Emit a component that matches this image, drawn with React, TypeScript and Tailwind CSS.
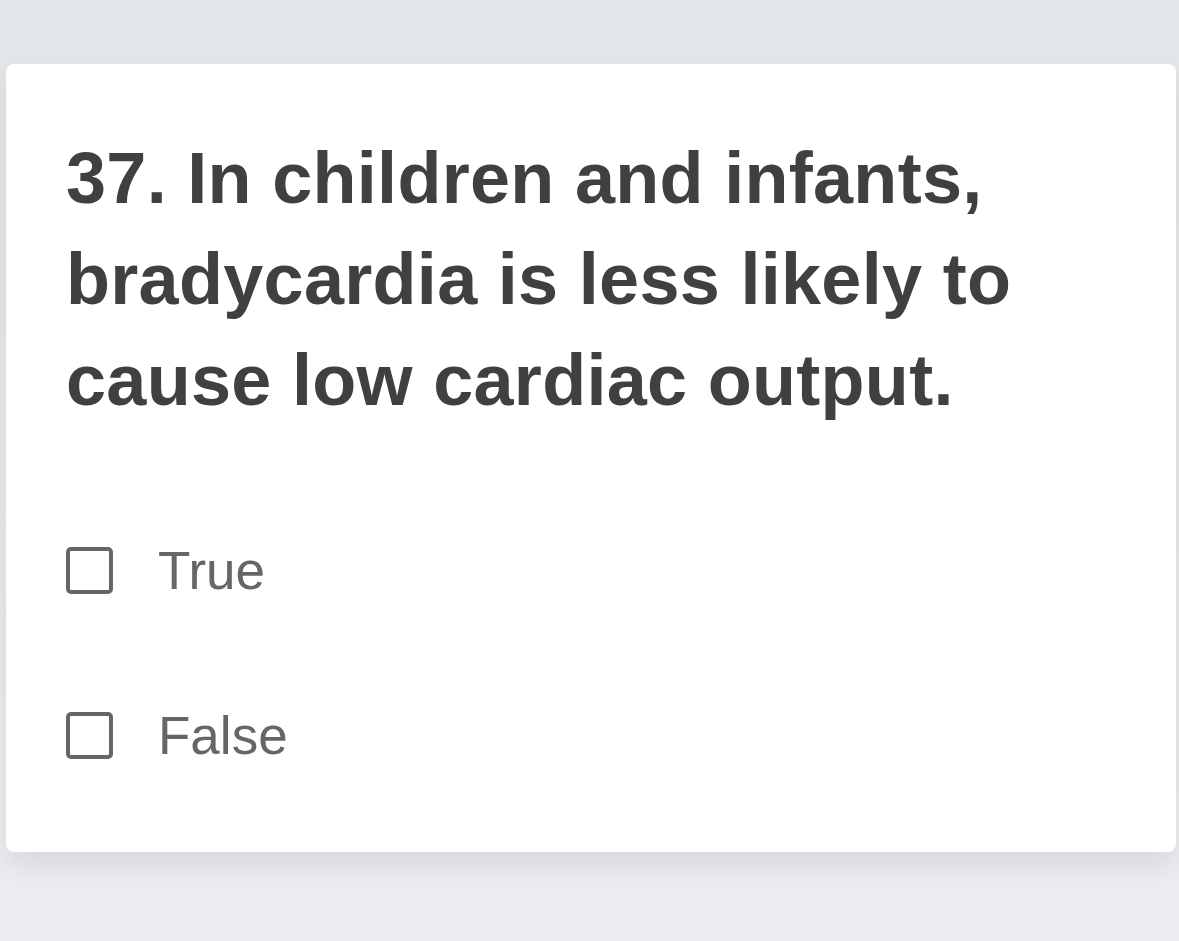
import React from 'react';

const options = ['True', 'False'];

const App: React.FC = () => {
  return (
    <div
      className="min-h-screen bg-gradient-to-b from-[#e3e6e9] to-[#eceef1] pt-[64px] pl-[6px] pr-[3px] pb-[90px]"
      style={{ fontFamily: '"Liberation Sans", Arial, sans-serif' }}
    >
      {/* Question card */}
      <div className="bg-white rounded-[8px] shadow-[0_14px_30px_rgba(0,0,0,0.09)] pt-[64px] pl-[60px] pr-[40px] pb-[84px]">
        <h1 className="text-[72px] leading-[101px] font-bold tracking-[0.3px] text-[#404040]">
          37. In children and infants, bradycardia is less likely to cause low cardiac output.
        </h1>

        <div className="mt-[107px] flex flex-col gap-[100px]">
          {options.map((opt) => (
            <label key={opt} className="flex items-center gap-[45px] h-[65px]">
              <span className="w-[47px] h-[47px] border-4 border-[#666666] rounded-[5px] shrink-0" />
              <span className="text-[53px] leading-[65px] text-[#666666]">{opt}</span>
            </label>
          ))}
        </div>
      </div>
    </div>
  );
};

export default App;
